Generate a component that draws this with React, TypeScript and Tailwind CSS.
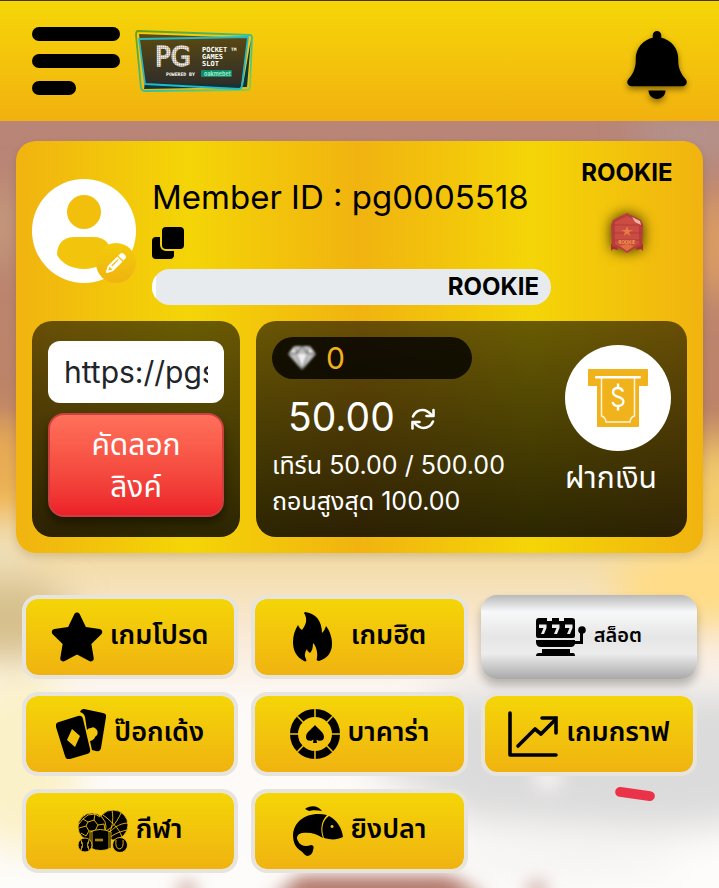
import type { ReactNode } from "react";
import { FaBell, FaPencil, FaStar } from "react-icons/fa6";

const member = {
  id: "pg0005518",
  rank: "ROOKIE",
  link: "https://pgslot.co/register",
  diamonds: "0",
  balance: "50.00",
  turnover: "50.00 / 500.00",
  maxWithdraw: "100.00",
};

function Backdrop() {
  return (
    <div className="absolute inset-0 -z-10 overflow-hidden bg-white" aria-hidden="true">
      <svg viewBox="0 0 719 888" preserveAspectRatio="none" className="h-full w-full">
        <defs>
          <linearGradient id="sky" x1="0" y1="0" x2="0" y2="1">
            <stop offset="0.13" stopColor="#b88578" />
            <stop offset="0.46" stopColor="#bd8468" />
            <stop offset="0.56" stopColor="#eeb95a" />
            <stop offset="0.63" stopColor="#f3dca8" />
            <stop offset="0.72" stopColor="#f9ead9" />
            <stop offset="0.79" stopColor="#fdf9f7" />
            <stop offset="1" stopColor="#fdfcfa" />
          </linearGradient>
          <filter id="soft" x="-50%" y="-50%" width="200%" height="200%">
            <feGaussianBlur stdDeviation="18" />
          </filter>
          <filter id="softer" x="-50%" y="-50%" width="200%" height="200%">
            <feGaussianBlur stdDeviation="9" />
          </filter>
        </defs>
        <rect width="719" height="888" fill="url(#sky)" />
        <g filter="url(#soft)">
          <rect x="640" y="110" width="100" height="50" fill="#b3938c" />
          <ellipse cx="719" cy="245" rx="24" ry="55" fill="#e0a061" />
          <ellipse cx="0" cy="225" rx="16" ry="40" fill="#c9a080" />
          <ellipse cx="0" cy="455" rx="18" ry="40" fill="#f0b14e" />
          <ellipse cx="0" cy="545" rx="30" ry="18" fill="#eee3c6" />
          <ellipse cx="719" cy="490" rx="24" ry="50" fill="#f5d271" />
          <ellipse cx="10" cy="618" rx="62" ry="42" fill="#d6c08d" />
          <ellipse cx="700" cy="585" rx="90" ry="38" fill="#ffdc85" />
          <ellipse cx="20" cy="760" rx="60" ry="90" fill="#fbf1c8" />
          <path d="M450 690h310v130l-100 10-190-10-110-60z" fill="#dcdbdb" />
          <ellipse cx="560" cy="860" rx="120" ry="12" fill="#f2f0f0" />
        </g>
        <g filter="url(#softer)">
          <path d="M270 900l30-24h150l40 24z" fill="#a9685a" />
          <ellipse cx="187" cy="890" rx="9" ry="9" fill="#bd9088" />
          <ellipse cx="537" cy="890" rx="9" ry="9" fill="#bd9088" />
          <ellipse cx="548" cy="778" rx="14" ry="10" fill="#fbf6f5" />
        </g>
      </svg>
    </div>
  );
}

function Logo() {
  return (
    <svg viewBox="0 0 118 62" className="h-[62px] w-[118px]" role="img" aria-label="PG Pocket Games Slot">
      <defs>
        <linearGradient id="plate" x1="0" y1="0" x2="0" y2="1">
          <stop offset="0" stopColor="#5c4a10" />
          <stop offset="1" stopColor="#2b2b2b" />
        </linearGradient>
        <linearGradient id="rimA" x1="0" y1="0" x2="1" y2="1">
          <stop offset="0" stopColor="#6f9c14" />
          <stop offset="0.6" stopColor="#37c3a0" />
          <stop offset="1" stopColor="#8ccf3e" />
        </linearGradient>
        <pattern id="dots" width="2" height="2" patternUnits="userSpaceOnUse">
          <rect width="2" height="2" fill="#a39c90" />
          <rect width="1.5" height="1.5" fill="#f7f0e6" />
        </pattern>
      </defs>
      <path d="M4 4l109 4-7 50-96-1z" fill="url(#plate)" />
      <path d="M9 59l103-2 4-48-8 46-98-2z" fill="#06383f" />
      <path d="M3 1l112 4q2 0 2 3l-2 49q0 3-3 3L10 61q-3 0-4-3L1 5q0-4 2-4z" fill="none" stroke="url(#rimA)" strokeWidth="1.8" />
      <path d="M4 9l109-2-6 48q0 4-4 4L10 54z" fill="none" stroke="#27b8c6" strokeWidth="1.8" strokeLinejoin="round" />
      <text x="20" y="36" fontSize="26" fontWeight="400" fill="url(#dots)" stroke="url(#dots)" strokeWidth="1.4" className="font-['DejaVu_Sans']">PG</text>
      <g fill="#fff" fontWeight="700" className="font-['DejaVu_Sans_Mono']">
        <text x="67" y="22" fontSize="7">POCKET</text>
        <text x="67" y="29" fontSize="7">GAMES</text>
        <text x="67" y="36" fontSize="7">SLOT</text>
        <text x="96" y="21" fontSize="4.5">TM</text>
        <text x="31" y="46" fontSize="4.8">POWERED BY</text>
      </g>
      <rect x="66" y="40" width="31" height="7" rx="1" fill="#10896f" />
      <text x="69" y="45.5" fontSize="5.5" fontWeight="700" fill="#9af0c0" className="font-['Inter']">oakmebet</text>
    </svg>
  );
}

function RankBadge() {
  return (
    <svg viewBox="0 0 34 40" className="h-10 w-[34px] drop-shadow-[0_0_7px_rgba(0,0,0,0.8)]" aria-hidden="true">
      <path d="M1 31l5-2 2 8-5-1-2 2zM33 31l-5-2-2 8 5-1 2 2z" fill="#a92f2c" />
      <path d="M17 0l14 7 2 5-1 21-9 3-6 4-6-4-9-3L1 12l2-5z" fill="#b93c3c" />
      <path d="M17 3l12 6v22l-12 6-12-6V9z" fill="#cb4c42" />
      <path d="M2 12h30M2 20h30M2 27h30" stroke="#a8383a" strokeWidth="0.8" />
      <path d="M22 4l8 4 1 4-6-3z" fill="#f0b5a8" />
      <path d="M17 13l1.400 4h4.600l-4 2 1.500 4-3.500-2.500-3.500 2.500 1.500-4-4-2h4.600z" fill="#e87a45" />
      <path d="M10 33l7-2 7 2-7 5z" fill="#e0703f" />
      <text x="17" y="31" fontSize="4.500" fontWeight="700" textAnchor="middle" fill="#f2a04f" className="font-['Inter']">ROOKIE</text>
    </svg>
  );
}

function AvatarIcon() {
  return (
    <svg viewBox="0 0 104 104" className="size-[104px]" aria-hidden="true">
      <circle cx="52" cy="52" r="52" fill="#fff" />
      <circle cx="52" cy="33" r="17" fill="#f2c00c" />
      <path d="M43 58h18c13 0 18 8 18 18-5 9-16 14-27 14s-22-5-27-14c0-10 5-18 18-18z" fill="#f2c40b" />
    </svg>
  );
}

function CopyIcon() {
  return (
    <svg viewBox="0 0 32 32" className="size-8" aria-hidden="true">
      <path d="M4 10h4v8a6 6 0 0 0 6 6h8v4a4 4 0 0 1-4 4H4a4 4 0 0 1-4-4V14a4 4 0 0 1 4-4z" />
      <rect x="10" width="22" height="22" rx="4" />
    </svg>
  );
}

function DiamondIcon() {
  return (
    <svg viewBox="0 0 28 26" className="h-[26px] w-7 blur-[1px]" aria-hidden="true">
      <path d="M6 1h16l6 8-14 16L0 9z" fill="#bdbdbd" />
      <path d="M6 1l3 7 5-7 5 7 3-7M0 9l9-1 5 17 5-17 9 1" fill="none" stroke="#555" strokeWidth="1" />
      <path d="M9 9h10l-5 14z" fill="#eee" />
      <path d="M2 8l5-6 1 6zM26 8l-5-6-1 6z" fill="#e4e4e4" />
    </svg>
  );
}

function RefreshIcon() {
  return (
    <svg viewBox="0 0 24 22" className="h-[22px] w-6" fill="none" stroke="currentColor" strokeWidth="2.600" strokeLinecap="round" strokeLinejoin="round" aria-hidden="true">
      <path d="M2 8.500C4 4 7.500 2 11.500 2c4 0 6.500 2 9.500 5.500" />
      <path d="M22.500 2v6h-7" />
      <path d="M22 13.500C20 18 16.500 20 12.500 20c-4 0-6.500-2-9.500-5.500" />
      <path d="M1.500 20.500v-6.500h7" />
    </svg>
  );
}

function DepositIcon() {
  return (
    <svg viewBox="0 0 60 58" className="h-[58px] w-[60px]" aria-hidden="true">
      <path d="M1 0h58q1 0 1 1v15q0 1-1 1h-8v40q0 1-1 1H10q-1 0-1-1V17H1q-1 0-1-1V1q0-1 1-1z" fill="#f0b31b" />
      <rect x="7" y="7" width="46" height="2.400" rx="1" fill="#fff" />
      <path d="M13.500 9v38q4 1 4.500 6h24q.5-5 4.500-6V9" fill="none" stroke="#fff" strokeOpacity="0.85" strokeWidth="1.500" />
      <path d="M35 22.500c-1-2.500-3-3.500-5-3.500-3 0-5 1.700-5 4.300 0 6 10.400 3.200 10.400 9.300 0 2.700-2.400 4.400-5.400 4.400-2.800 0-4.800-1.400-5.400-4M30 14.500V19M30 37v4.500" fill="none" stroke="#fff" strokeWidth="2.400" />
    </svg>
  );
}

function FlameIcon() {
  return (
    <svg viewBox="0 0 50 50" className="size-[50px]" aria-hidden="true">
      <path d="M12 0c10 1 17 8 17 21 2-2 3-4 4-7 4 5 6 12 6 18 0 8-4 14-13 17-2 0-3-1-2-3 1-6-1-12-4-15 0 5-1 8-3 10-2-1-3-3-3-4-2 3-3 6-1 10 1 2 0 3-2 2C3 45 0 38 0 30c0-7 2-12 5-17 1 2 2 4 4 5 4-5 6-11 2-17z" />
    </svg>
  );
}

function SlotIcon() {
  return (
    <svg viewBox="0 0 50 40" className="h-10 w-[50px]" aria-hidden="true">
      <path d="M3 1h8v3h5V1h7v3h5V1h8q3 0 3 3v15q0 2-2 2H2q-2 0-2-2V4q0-3 3-3z" />
      <path d="M3 7.500h7.500V11L8 17H5l2.500-6H3zM16 7.500h7.500V11L21 17h-3l2.500-6H16zM29 7.500h7.500V11L34 17h-3l2.500-6H29z" fill="#ededed" />
      <path d="M0 23h39v1h5v-8h3v11h-8q-1 3-4 3H5q-5 0-5-5z" />
      <circle cx="46" cy="13" r="3.800" />
      <path d="M6 32h28v4h3q2 0 2 3H0q0-3 3-3h3z" />
    </svg>
  );
}

function CardsIcon() {
  return (
    <svg viewBox="0 0 50 50" className="size-[50px]" aria-hidden="true">
      <path d="M24 3q1-3 4-3l19 4q4 1 3 4l-5 31q-1 4-5 3l-4-1-2-9q4-1 5-4 4-2 2-7-3-4-6-2-3 0-4 2L29 8q-1-4-5-5z" />
      <path fillRule="evenodd" d="M3 13l19-6q4-1 5 3l7 30q1 4-3 5l-17 5q-4 1-5-3L0 18q-1-4 3-5zM16 20l-5 11 8 7 5-11z" />
    </svg>
  );
}

function ChipIcon() {
  return (
    <svg viewBox="0 0 50 50" className="size-[50px]" aria-hidden="true">
      <circle cx="25" cy="25" r="21" fill="none" stroke="#000" strokeWidth="8" />
      <path d="M25 0v9M25 41v9M0 25h9M41 25h9M7.300 7.300l6.400 6.400M36.300 36.300l6.400 6.400M42.700 7.300l-6.400 6.400M13.700 36.300l-6.400 6.400" stroke="#f2c20c" strokeWidth="1.500" />
      <path d="M25 16c3 4 9 7 9 12 0 4-5 5-7.500 2.500L27 34h-4l.5-3.500C21 33 16 32 16 28c0-5 6-8 9-12z" />
    </svg>
  );
}

function GraphIcon() {
  return (
    <svg viewBox="0 0 50 46" className="h-[46px] w-[50px]" fill="none" stroke="#000" strokeWidth="3.600" strokeLinecap="round" strokeLinejoin="round" aria-hidden="true">
      <path d="M2 2v42h46" />
      <path d="M10 35l17-17 6 5L47 9" />
      <path d="M34 7h14v15" strokeLinejoin="miter" />
    </svg>
  );
}

function SportsIcon() {
  return (
    <svg viewBox="0 0 50 42" className="h-[42px] w-[50px]" aria-hidden="true">
      <g stroke="#f2c20c" strokeWidth="0.9" fill="none">
        <circle cx="35" cy="15" r="15" fill="#000" />
        <path d="M34 0c2 10 0 20-5 27M43 3C38 14 33 20 22 23M50 13c-8 0-18 6-22 15M25 5c8 6 16 13 19 22M49 20C40 22 34 25 31 29" />
        <circle cx="14" cy="17" r="14" fill="#000" />
        <path d="M10 12l6-2 4 5-3 6h-6l-3-5zM10 12L5 9M16 10l1-6M20 15l6-1M17 21l4 5M11 21l-3 5M8 16l-7 2M5 9l5-4 7-1 5 3M5 9L1 14M26 14l1 6-6 6M8 26l-5-3" />
        <path d="M12 22q10-5 21 0v16q-10 5-21 0z" fill="#000" />
        <path d="M14 21v18M31 21v18M17 30h8M18 28.500v3M20 28.500v3M22 28.500v3M24 28.500v3" />
        <circle cx="7" cy="35" r="7" fill="#000" />
        <path d="M3 30q3 5 0 10M11 30q-3 5 0 10M3 33h2M3 37h2M9 33h2M9 37h2" />
        <circle cx="42" cy="35" r="7.500" fill="#000" />
        <path d="M38 30q-1 8 3 9 5 0 4-9" />
      </g>
    </svg>
  );
}

function FishIcon() {
  return (
    <svg viewBox="0 0 50 50" className="size-[50px]" aria-hidden="true">
      <path d="M12 3c5-4 13-4 17 2-5-1-10-1-13 0z" />
      <path d="M34 9c-6 6-7 15-4 23-7-5-14-6-21-5-5 1-6 5-4 8 2 5 8 6 13 4 3 0 3 3 2 5 0 3-3 6-6 6-3-1-3-3-6-5C3 42 0 37 0 29 1 15 14 5 34 9z" />
      <path fillRule="evenodd" d="M36 10c8 4 13 12 14 21-6 3-12 3-19 1-3-9-2-17 5-22zM39 19a1.500 1.500 0 1 0 0.100 0z" />
    </svg>
  );
}

type Game = { label: string; icon: ReactNode; active?: boolean };

const games: Game[] = [
  { label: "เกมโปรด", icon: <FaStar className="size-[50px] scale-110" /> },
  { label: "เกมฮิต", icon: <FlameIcon /> },
  { label: "สล็อต", icon: <SlotIcon />, active: true },
  { label: "ป๊อกเด้ง", icon: <CardsIcon /> },
  { label: "บาคาร่า", icon: <ChipIcon /> },
  { label: "เกมกราฟ", icon: <GraphIcon /> },
  { label: "กีฬา", icon: <SportsIcon /> },
  { label: "ยิงปลา", icon: <FishIcon /> },
];

function GameButton({ game }: { game: Game }) {
  if (game.active) {
    return (
      <button
        type="button"
        className="flex h-[84px] w-full items-center justify-center gap-2 rounded-2xl bg-[linear-gradient(#b9b9b9,#f7f8f9_20%,#e6e6e6_50%,#ececec_70%,#a9a9a9)] text-xl font-semibold shadow-[0_6px_10px_rgba(0,0,0,0.25)]"
      >
        {game.icon}
        <span className="pb-1">{game.label}</span>
      </button>
    );
  }
  return (
    <button
      type="button"
      className="flex h-[84px] w-full items-center justify-center gap-2 rounded-2xl border-4 border-[#e6e4dc] bg-linear-to-b from-[#f4d507] to-[#f0b310] bg-clip-padding text-[27px] font-semibold"
    >
      {game.icon}
      <span className="pb-1">{game.label}</span>
    </button>
  );
}

function Header() {
  return (
    <header className="flex h-[121px] items-center justify-between border-t border-[#4a3510] bg-linear-to-b from-[#f5d607] to-[#f1b10f] px-8">
      <div className="flex items-center gap-[15px]">
        <button type="button" aria-label="Menu" className="flex flex-col gap-[13px]">
          <span className="h-3.5 w-[88px] rounded-full bg-black" />
          <span className="h-3.5 w-[88px] rounded-full bg-black" />
          <span className="h-3.5 w-11 rounded-full bg-black" />
        </button>
        <a href="#">
          <Logo />
        </a>
      </div>
      <button type="button" aria-label="Notifications" className="mt-2">
        <FaBell className="h-[68px] w-[60px] drop-shadow-[0_3px_3px_rgba(0,0,0,0.45)]" />
      </button>
    </header>
  );
}

function Profile() {
  return (
    <div className="flex gap-4">
      <div className="relative shrink-0 self-center">
        <AvatarIcon />
        <button
          type="button"
          aria-label="Edit profile"
          className="absolute right-0 bottom-0 flex size-10 items-center justify-center rounded-full bg-linear-to-b from-[#f3cb0a] to-[#f0b310] text-white"
        >
          <FaPencil className="size-5" />
        </button>
      </div>
      <div className="min-w-0 flex-1 pt-4">
        <p className="text-[33px] leading-[48px] whitespace-nowrap">Member ID : {member.id}</p>
        <button type="button" aria-label="Copy member ID" className="mt-1.5 block">
          <CopyIcon />
        </button>
        <div className="mt-2.5 flex h-9 items-center justify-between overflow-hidden rounded-full bg-[#e8ebee] pr-3 text-2xl font-bold">
          <span className="h-full w-1 bg-white" />
          {member.rank}
        </div>
      </div>
      <div className="flex w-[120px] shrink-0 flex-col items-center gap-6">
        <p className="text-2xl font-bold">{member.rank}</p>
        <RankBadge />
      </div>
    </div>
  );
}

function Wallet() {
  return (
    <div className="mt-4 flex gap-4">
      <div className="flex w-52 shrink-0 flex-col gap-2.5 rounded-[20px] bg-linear-to-b from-black/57 to-black/82 px-4 py-5">
        <input
          aria-label="Referral link"
          readOnly
          defaultValue={member.link}
          className="h-[62px] w-full rounded-xl bg-white px-4 text-[30px] text-[#212529]"
        />
        <button
          type="button"
          className="h-[104px] rounded-2xl border-2 border-[#c8403f] bg-linear-to-b from-[#ff705a] to-[#ec1f29] px-8 text-[30px] leading-[42px] text-white shadow-[0_6px_10px_rgba(0,0,0,0.4)]"
        >
          คัดลอก ลิงค์
        </button>
      </div>
      <div className="flex flex-1 justify-between rounded-[20px] bg-linear-to-b from-black/57 to-black/82 p-4 text-white">
        <div>
          <div className="flex h-[42px] w-[200px] items-center gap-2.5 rounded-full bg-black/80 px-4 text-[30px] text-[#f2b01e]">
            <DiamondIcon />
            {member.diamonds}
          </div>
          <div className="mt-2 flex items-center gap-4 pl-4 text-[39px] leading-[60px]">
            {member.balance}
            <button type="button" aria-label="Refresh balance" className="pt-1">
              <RefreshIcon />
            </button>
          </div>
          <p className="text-[25px] leading-9">เทิร์น {member.turnover}</p>
          <p className="text-[25px] leading-9">ถอนสูงสุด {member.maxWithdraw}</p>
        </div>
        <a href="#" className="pt-2 text-[30px] leading-[52px]">
          <span className="flex size-[106px] items-center justify-center rounded-full bg-white">
            <DepositIcon />
          </span>
          ฝากเงิน
        </a>
      </div>
    </div>
  );
}

export default function App() {
  return (
    <div className="relative isolate min-h-screen overflow-hidden font-['Inter','Noto_Sans_Thai',sans-serif] text-black">
      <Backdrop />
      <Header />
      <main className="pt-5 pb-4">
        <section className="mx-4 rounded-[20px] bg-[linear-gradient(90deg,#f1b310,#f4d507_25%,#f1b310_50%,#f4d507_75%,#f1b310)] p-4 shadow-[0_4px_10px_rgba(0,0,0,0.12)]">
          <Profile />
          <Wallet />
        </section>
        <nav className="relative mx-[22px] mt-[42px]">
          <ul className="grid grid-cols-3 gap-[13px]">
            {games.map((game) => (
              <li key={game.label}>
                <GameButton game={game} />
              </li>
            ))}
          </ul>
          <span className="absolute right-[42px] bottom-[74px] h-2.5 w-10 rotate-8 rounded-full bg-[#ea3348]" />
        </nav>
      </main>
    </div>
  );
}
